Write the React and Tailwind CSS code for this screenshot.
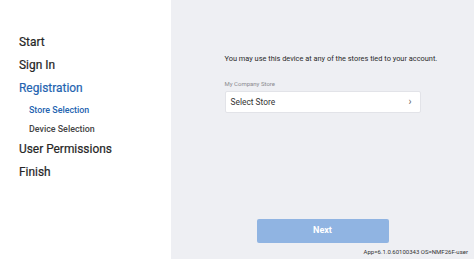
export default function App() {
  const steps = [
    { label: "Start", type: "main" },
    { label: "Sign In", type: "main" },
    { label: "Registration", type: "main", active: true },
    { label: "Store Selection", type: "sub", active: true },
    { label: "Device Selection", type: "sub" },
    { label: "User Permissions", type: "main" },
    { label: "Finish", type: "main" },
  ];

  return (
    <div
      className="flex w-[474px] h-[259px] bg-white overflow-hidden"
      style={{ fontFamily: "Roboto, 'Liberation Sans', sans-serif" }}
    >
      {/* steps sidebar */}
      <div className="w-[171px] shrink-0 bg-white pt-[31px] pl-[19px]">
        {steps.map((s) =>
          s.type === "main" ? (
            <div
              key={s.label}
              className={`h-[23px] leading-[23px] text-[11.9px] font-normal [-webkit-text-stroke:0.2px] ${
                s.active ? "text-[#2463b0]" : "text-[#262626]"
              }`}
            >
              {s.label}
            </div>
          ) : (
            <div
              key={s.label}
              className={`h-[19px] leading-[20px] pl-[10px] text-[8.9px] font-medium ${
                s.active ? "text-[#2463b0]" : "text-[#444444]"
              }`}
            >
              {s.label}
            </div>
          )
        )}
      </div>

      {/* content */}
      <div className="flex-1 bg-[#eeeff3] flex flex-col items-center">
        <div className="w-[196px] pt-[54px]">
          <p className="text-[7.4px] leading-[10px] text-[#2a2a2a] whitespace-nowrap">
            You may use this device at any of the stores tied to your account.
          </p>
          <p className="mt-[16px] text-[6px] leading-[8px] text-[#8a8a8e]">
            My Company Store
          </p>
          <div className="mt-[3px] h-[22px] bg-white rounded-[2px] border border-[#e2e3e8] flex items-center justify-between pl-[5px] pr-[8px]">
            <span className="text-[8.4px] text-[#333333]">Select Store</span>
            <span className="text-[10px] leading-none text-[#666666]">›</span>
          </div>
        </div>

        <div className="flex-1" />

        <button className="w-[132px] h-[24px] rounded-[2px] bg-[#90b4e2] text-white text-[9px] font-bold">
          Next
        </button>

        <div className="w-full flex justify-end pr-[6px] h-[16px] items-center">
          <span className="text-[6px] text-[#333333] whitespace-nowrap">
            App=6.1.0.60100343 OS=NMF26F-user
          </span>
        </div>
      </div>
    </div>
  );
}
